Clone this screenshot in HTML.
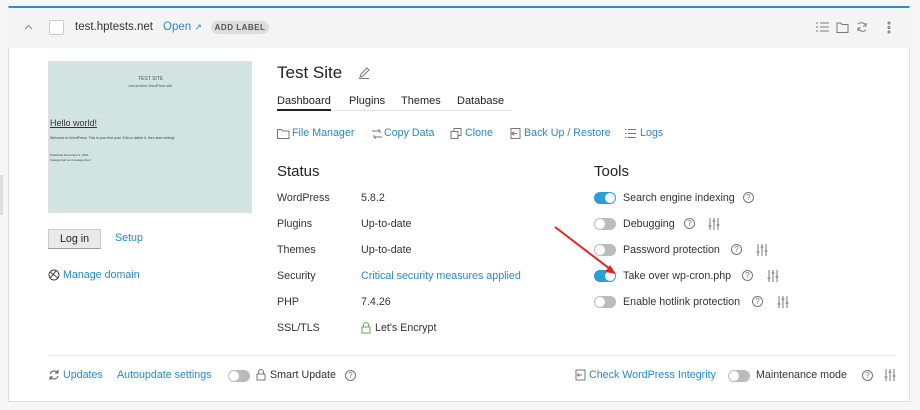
<!DOCTYPE html>
<html><head><meta charset="utf-8"><style>
*{margin:0;padding:0;box-sizing:border-box}
body{width:920px;height:410px;background:#f6f6f6;font-family:"Liberation Sans",sans-serif;font-size:10.7px;color:#333;position:relative;overflow:hidden}
.a{position:absolute;white-space:nowrap}
.card{position:absolute;left:8px;top:6px;width:902px;height:396px;background:#fff;border:1px solid #ddd;border-top:2px solid #2e8ec2}
.hdr{position:absolute;left:8px;top:8px;width:902px;height:40px;background:#f4f4f4}
.link{color:#2889c0}
.tg{position:absolute;width:22px;height:12px;border-radius:6px;background:#bbb}
.tg::after{content:"";position:absolute;top:1px;left:1px;width:10px;height:10px;border-radius:50%;background:#fff}
.tg.on{background:#2b9fd8}.tg.on::after{left:11px}
.q{position:absolute;width:11px;height:11px;border:1px solid #777;border-radius:50%;font-size:8px;line-height:9px;text-align:center;color:#777}
svg{position:absolute}
</style></head><body>
<div style="position:absolute;left:0;top:175px;width:3px;height:40px;background:#ddd"></div>
<div class="card"></div>
<div class="hdr"></div>
<svg style="left:24px;top:24px" width="9" height="6" fill="none" stroke="#888"><path d="M1 5l3.5-3.5L8 5"/></svg>
<div class="a" style="left:49px;top:20px;width:15px;height:15px;border:1px solid #ccc;background:#fff;border-radius:2px"></div>
<div class="a" style="left:75px;top:21px;font-size:11.5px;color:#333">test.hptests.net</div>
<div class="a link" style="left:163px;top:21px;font-size:11.5px">Open <span style="font-size:9px">&#8599;</span></div>
<div class="a" style="left:211px;top:21px;width:58px;height:13px;border-radius:7px;background:#ddd;font-size:8px;font-weight:bold;color:#555;text-align:center;line-height:13px;letter-spacing:.5px">ADD LABEL</div>
<svg style="left:816px;top:20px" width="80" height="16" fill="none" stroke="#777" stroke-width="1">
<path d="M0 3h2M4 3h9M0 7h2M4 7h9M0 11h2M4 11h9"/>
<path d="M21 3h4l1 1.5h6v8h-11z"/>
<path d="M42 4a5 5 0 0 1 8 2M50 10a5 5 0 0 1-8-2M50 3v3h-3M42 11v-3h3"/>
<circle cx="73" cy="3" r="1"/><circle cx="73" cy="7.5" r="1"/><circle cx="73" cy="12" r="1"/>
</svg>
<div class="a" style="left:48px;top:61px;width:204px;height:152px;background:#d2e4df;border:1px solid #e0e0e0"></div>
<div class="a" style="left:138px;top:76px;font-size:5px;color:#555">TEST SITE</div>
<div class="a" style="left:128px;top:84px;font-size:3.5px;color:#555">Just another WordPress site</div>
<div class="a" style="left:50px;top:118px;font-size:9px;color:#333;text-decoration:underline">Hello world!</div>
<div class="a" style="left:50px;top:136px;font-size:3.5px;color:#444">Welcome to WordPress. This is your first post. Edit or delete it, then start writing!</div>
<div class="a" style="left:50px;top:153px;font-size:3px;color:#444">Published December 9, 2021</div>
<div class="a" style="left:50px;top:158px;font-size:3px;color:#444">Categorized as Uncategorized</div>
<div class="a" style="left:48px;top:229px;width:53px;height:20px;background:#e9e9e9;border:1px solid #ccc;border-bottom-color:#999;font-size:10.7px;text-align:center;line-height:18px;color:#222">Log in</div>
<div class="a link" style="left:115px;top:232px">Setup</div>
<svg style="left:48px;top:269px" width="12" height="12" fill="none" stroke="#444"><circle cx="6" cy="6" r="5"/><path d="M2 3l8 6M2 9l6-7"/></svg>
<div class="a link" style="left:63px;top:269px">Manage domain</div>
<div class="a" style="left:277px;top:63px;font-size:17px;color:#222">Test Site</div>
<svg style="left:358px;top:67px" width="12" height="12" fill="none" stroke="#777"><path d="M2 10l1-3 6-6 2 2-6 6z M1 11.5h10"/></svg>
<div class="a" style="left:277px;top:95px;color:#222;font-size:11px">Dashboard</div>
<div class="a" style="left:349px;top:95px;color:#222;font-size:11px">Plugins</div>
<div class="a" style="left:401px;top:95px;color:#222;font-size:11px">Themes</div>
<div class="a" style="left:457px;top:95px;color:#222;font-size:11px">Database</div>
<div class="a" style="left:277px;top:110px;width:235px;height:1px;background:#e2e2e2"></div>
<div class="a" style="left:277px;top:109px;width:54px;height:2px;background:#222"></div>
<svg style="left:277px;top:127px" width="390" height="13" fill="none" stroke="#777">
<path d="M0.5 2.5h4l1 1.5h6.5v7.5h-11.5z"/>
<path d="M95 4h8v2M103 4l-2-1.5M105 10h-8v-2M97 10l2 1.5"/>
<path d="M174 4.5h7v7h-7zM177 4.5v-3h7v7h-3"/>
<path d="M234 1.5h9v10h-9zM240 6.5h-5M237 4.5l-2 2 2 2"/>
<path d="M348 2.5h1.5M351 2.5h8M348 6.5h1.5M351 6.5h8M348 10.5h1.5M351 10.5h8"/>
</svg>
<div class="a link" style="left:292px;top:127px">File Manager</div>
<div class="a link" style="left:384px;top:127px">Copy Data</div>
<div class="a link" style="left:465px;top:127px">Clone</div>
<div class="a link" style="left:524px;top:127px">Back Up / Restore</div>
<div class="a link" style="left:640px;top:127px">Logs</div>
<div class="a" style="left:277px;top:163px;font-size:15px;color:#222">Status</div>
<div class="a" style="left:594px;top:163px;font-size:15px;color:#222">Tools</div>
<div class="a" style="left:277px;top:192px">WordPress</div><div class="a" style="left:361px;top:192px">5.8.2</div>
<div class="a" style="left:277px;top:218px">Plugins</div><div class="a" style="left:361px;top:218px">Up-to-date</div>
<div class="a" style="left:277px;top:244px">Themes</div><div class="a" style="left:361px;top:244px">Up-to-date</div>
<div class="a" style="left:277px;top:270px">Security</div><div class="a link" style="left:361px;top:270px">Critical security measures applied</div>
<div class="a" style="left:277px;top:296px">PHP</div><div class="a" style="left:361px;top:296px">7.4.26</div>
<div class="a" style="left:277px;top:322px">SSL/TLS</div>
<svg style="left:361px;top:321px" width="10" height="13" fill="none" stroke="#6aa84f"><path d="M2.5 6V4a2.5 2.5 0 0 1 5 0v2M1 6h8v6H1z"/></svg>
<div class="a" style="left:375px;top:322px">Let's Encrypt</div>
<div class="tg on" style="left:594px;top:192px"></div><div class="a" style="left:623px;top:192px">Search engine indexing</div><div class="q" style="left:743px;top:192px">?</div>
<div class="tg" style="left:594px;top:218px"></div><div class="a" style="left:623px;top:218px">Debugging</div><div class="q" style="left:684px;top:218px">?</div>
<div class="tg" style="left:594px;top:244px"></div><div class="a" style="left:623px;top:244px">Password protection</div><div class="q" style="left:731px;top:244px">?</div>
<div class="tg on" style="left:594px;top:270px"></div><div class="a" style="left:623px;top:270px">Take over wp-cron.php</div><div class="q" style="left:742px;top:270px">?</div>
<div class="tg" style="left:594px;top:296px"></div><div class="a" style="left:623px;top:296px">Enable hotlink protection</div><div class="q" style="left:752px;top:296px">?</div>
<svg style="left:708px;top:218px" width="12" height="12" fill="none" stroke="#777"><path d="M2 0v12M6 0v12M10 0v12M0.5 8h3M4.5 3h3M8.5 7h3"/></svg>
<svg style="left:756px;top:244px" width="12" height="12" fill="none" stroke="#777"><path d="M2 0v12M6 0v12M10 0v12M0.5 8h3M4.5 3h3M8.5 7h3"/></svg>
<svg style="left:767px;top:270px" width="12" height="12" fill="none" stroke="#777"><path d="M2 0v12M6 0v12M10 0v12M0.5 8h3M4.5 3h3M8.5 7h3"/></svg>
<svg style="left:777px;top:296px" width="12" height="12" fill="none" stroke="#777"><path d="M2 0v12M6 0v12M10 0v12M0.5 8h3M4.5 3h3M8.5 7h3"/></svg>
<svg style="left:550px;top:222px" width="70" height="55"><path d="M5 5L60 47" stroke="#e8231f" stroke-width="2"/><path d="M66 52l-11-2 5-7z" fill="#e8231f"/></svg>
<div class="a" style="left:48px;top:355px;width:848px;height:1px;background:#e6e6e6"></div>
<svg style="left:48px;top:369px" width="12" height="12" fill="none" stroke="#555"><path d="M2 5a4.5 4.5 0 0 1 8-1M10 7a4.5 4.5 0 0 1-8 1M10 1v3H7M2 11V8h3"/></svg>
<div class="a link" style="left:63px;top:369px">Updates</div>
<div class="a link" style="left:117px;top:369px">Autoupdate settings</div>
<div class="tg" style="left:228px;top:370px"></div>
<svg style="left:256px;top:368px" width="10" height="13" fill="none" stroke="#777"><path d="M2.5 6V4a2.5 2.5 0 0 1 5 0v2M1 6h8v6H1z"/></svg>
<div class="a" style="left:270px;top:369px">Smart Update</div><div class="q" style="left:345px;top:370px">?</div>
<svg style="left:575px;top:369px" width="11" height="12" fill="none" stroke="#777"><path d="M1 1h9v10H1zM7 6H2.5M4 4.5l-1.5 1.5 1.5 1.5"/></svg>
<div class="a link" style="left:589px;top:369px">Check WordPress Integrity</div>
<div class="tg" style="left:728px;top:370px"></div>
<div class="a" style="left:756px;top:369px">Maintenance mode</div><div class="q" style="left:862px;top:370px">?</div>
<svg style="left:884px;top:369px" width="12" height="12" fill="none" stroke="#777"><path d="M2 0v12M6 0v12M10 0v12M0.5 8h3M4.5 3h3M8.5 7h3"/></svg>
</body></html>
